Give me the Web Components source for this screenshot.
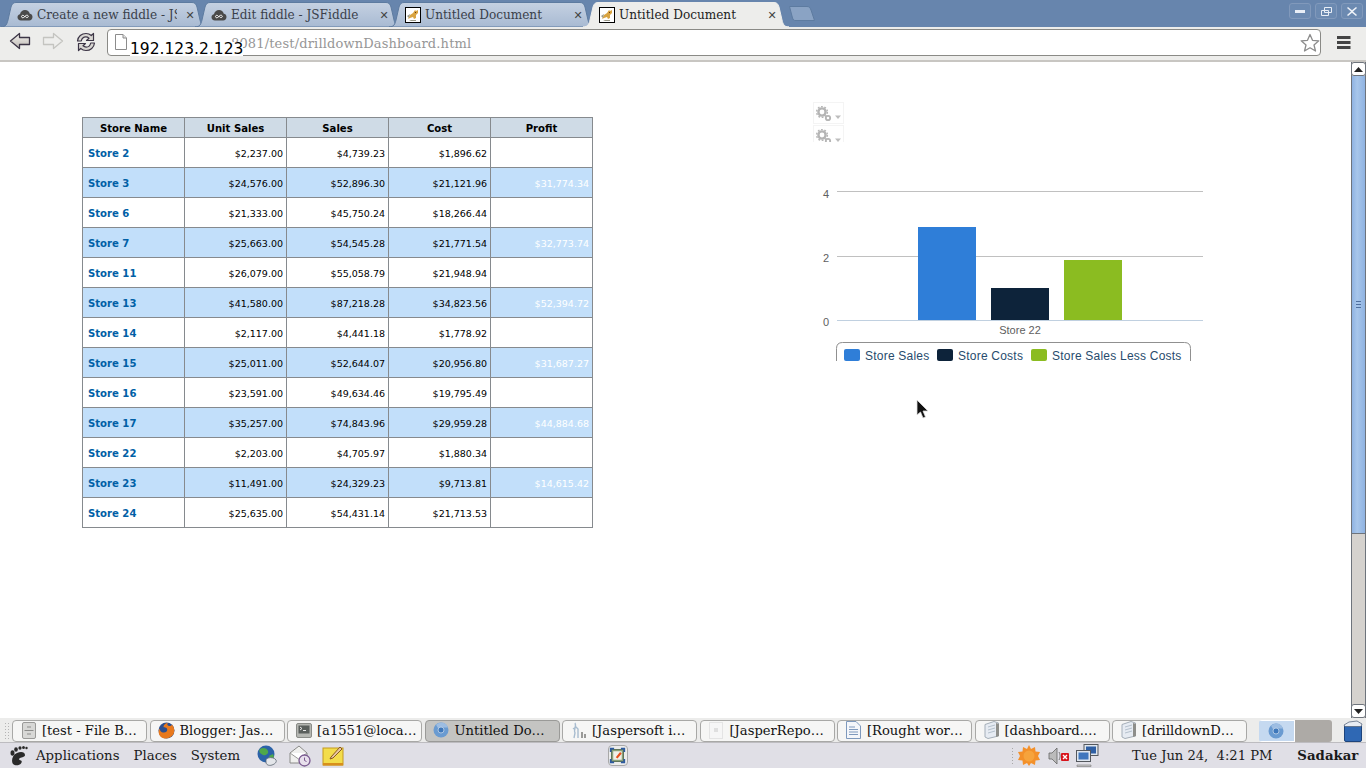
<!DOCTYPE html>
<html><head><meta charset="utf-8"><title>Untitled Document</title>
<style>html,body{margin:0;padding:0;overflow:hidden;background:#fff}</style></head>
<body>
<desktop-screen></desktop-screen>
<script>
const I={
cloud:'<svg width="16" height="12" viewBox="0 0 16 12"><path d="M4 11.5C1.8 11.5.5 10 .5 8.3.5 6.600 1.700 5.500 3 5.300 3.400 2.600 5.500 1 8 1c2.400 0 4.300 1.500 4.800 3.800 1.700.2 2.700 1.600 2.700 3.300 0 1.900-1.400 3.400-3.300 3.400z" fill="#4a4a4a"/><path d="M7.600 7.500c-.7-1-1.500-1.300-2.200-1.100-.8.200-1.100 1-.8 1.700.4.800 1.600.9 2.400.1l1.800-1.500c.8-.7 1.800-.6 2.300.1.400.7.100 1.500-.7 1.700-.8.200-1.500-.1-2.200-1.100" fill="none" stroke="#fff" stroke-width="1"/></svg>',
cat:'<svg width="16" height="16" viewBox="0 0 16 16"><rect x=".5" y=".5" width="15" height="15" fill="#fff" stroke="#000"/><path d="M3 12 5 8l3-2 2-3 1 1 2-1v3l-2 2v3l-2 1-1-2-3 1z" fill="#d9a441"/><path d="M2 9l3-2-1 4zM6 13h5v1H4z" fill="#9a9a8a"/><path d="M10 5h1v1h-1z" fill="#6a3a10"/></svg>',
back:'<svg width="22" height="20" viewBox="0 0 22 20"><path d="M1.500 10 10.500 2.500V6.500H20.500V13.500H10.500V17.500Z" fill="url(#g)" stroke="#3c3546" stroke-width="1.300" stroke-linejoin="round"/><defs><linearGradient id="g" x1="0" x2="0" y1="0" y2="1"><stop offset="0" stop-color="#f4f2ee"/><stop offset="1" stop-color="#bdb9b4"/></linearGradient></defs></svg>',
fwd:'<svg width="22" height="20" viewBox="0 0 22 20"><path d="M20.500 10 11.500 2.500V6.500H1.500V13.500H11.500V17.500Z" fill="#eeeeec" stroke="#c4c4c0" stroke-width="1.300" stroke-linejoin="round"/></svg>',
reload:'<svg width="22" height="22" viewBox="0 0 22 22"><path d="M2.500 10C3 5.500 6.500 2.500 11 2.500c2.500 0 4 .8 5.300 2L18.500 2.500V9.500H11.500L14 7.200C13 6.300 12 5.900 10.800 5.900 8.500 5.900 6.800 7.500 6.300 10Z" fill="#d8d6d2" stroke="#3c3546" stroke-width="1.200" stroke-linejoin="round"/><path d="M19.500 12C19 16.500 15.500 19.500 11 19.500c-2.500 0-4-.8-5.300-2L3.500 19.500V12.500H10.500L8 14.800C9 15.700 10 16.100 11.200 16.100c2.300 0 4-1.600 4.500-4.100Z" fill="#d8d6d2" stroke="#3c3546" stroke-width="1.200" stroke-linejoin="round"/></svg>',
page:'<svg width="12" height="16" viewBox="0 0 12 16"><path d="M.5.500H8L11.500 4V15.500H.5Z" fill="#fff" stroke="#8c8c8c"/><path d="M8 .5V4H11.500" fill="#e4e4e4" stroke="#8c8c8c"/></svg>',
star:'<svg width="20" height="19" viewBox="0 0 20 19"><path d="M10 1.500 12.500 7.300 18.800 7.800 14 12 15.500 18 10 14.800 4.500 18 6 12 1.200 7.800 7.500 7.300Z" fill="#fff" stroke="#8c8c8c" stroke-width="1.300" stroke-linejoin="round"/></svg>',
burger:'<svg width="14" height="13" viewBox="0 0 14 13"><path d="M0 0h13.500v3H0zM0 5h13.500v3H0zM0 10h13.500v3H0z" fill="#444"/></svg>',
gear:'<svg width="29" height="20" viewBox="0 0 29 20"><g fill="none" stroke="#b5b5b5"><circle cx="8" cy="9" r="3.600" stroke-width="2.400"/><circle cx="8" cy="9" r="5.400" stroke-width="1.400" stroke-dasharray="1.800 1.600"/><circle cx="14" cy="15" r="2.200" stroke-width="1.800"/></g><path d="M21 12.500h6l-3 3.500z" fill="#bdbdbd"/></svg>',
cabinet:'<svg width="16" height="17" viewBox="0 0 16 17"><rect x="1.500" y=".5" width="13" height="16" rx="1.500" fill="#d8d8d6" stroke="#9a9a98"/><path d="M3.500 8.500h9M6 5h4M6 12h4" stroke="#8c8c8a" fill="none"/></svg>',
firefox:'<svg width="17" height="17" viewBox="0 0 17 17"><circle cx="8.500" cy="8.500" r="8" fill="#2c4f8f"/><path d="M14 2.500C17 6 17 11 14 14 11 17 5.500 17.500 2.500 14.500 .5 12.500 0 9 1.500 6.500 2 9 3.500 10.500 5 10.500 8 11 10 9 9 6.500 8 5 6 6 5.500 5 5.500 3 7.500 1 10 1c-1 1 -1 2 0 2.500 1.500 1 3.500 .5 4-1z" fill="#e8791d"/></svg>',
term:'<svg width="16" height="16" viewBox="0 0 16 16"><rect x=".5" y="1.500" width="15" height="14" rx="1.500" fill="#b5b7b2" stroke="#8a8c88"/><rect x="2.500" y="3.500" width="11" height="8" fill="#5a5f5c"/><path d="M4 5l2 1.500L4 8M7 8.500h3" stroke="#e8e8e8" fill="none"/></svg>',
chrome:'<svg width="16" height="16" viewBox="0 0 16 16"><circle cx="8" cy="8" r="7.500" fill="#6a9bd1"/><path d="M8 .5A7.500 7.500 0 0 1 15 5.500H8A2.600 2.600 0 0 0 5.500 7L3 2.800A7.500 7.500 0 0 1 8 .5z" fill="#9dbde2"/><circle cx="8" cy="8" r="3" fill="#3f78bb" stroke="#c4d6ea" stroke-width=".8"/></svg>',
jasper:'<svg width="16" height="18" viewBox="0 0 16 18"><path d="M4 2c2 3-2 7 0 10l-1 5M4 5l3 3 0 9M2 8l3-2" stroke="#a8bccf" stroke-width="1.400" fill="none"/><path d="M10 11h2v6h-2zM13 13h2v4h-2z" fill="#9a9a98"/></svg>',
blank:'<svg width="14" height="17" viewBox="0 0 14 17"><rect x=".5" y=".5" width="13" height="16" fill="#f6f6f6" stroke="#e4e4e4"/><path d="M5 7h4M5 9h4" stroke="#c8c8c8"/></svg>',
doc:'<svg width="15" height="18" viewBox="0 0 15 18"><path d="M.5.500H10L14.500 5V17.500H.5Z" fill="#f4f6fa" stroke="#7e99bd"/><path d="M3 6h6M3 8.500h9M3 11h9M3 13.500h9" stroke="#7e99bd"/></svg>',
note:'<svg width="17" height="18" viewBox="0 0 17 18"><path d="M2 3.500 11 .5 15.500 2 15.500 15 5 17.500 2 16Z" fill="#e6ebf2" stroke="#a4aeb8"/><path d="M5 6l7-2M5 9l7-2M5 12l7-2" stroke="#b4c0cc"/><path d="M13 2l3 1v12l-3 1z" fill="#8e8e8a"/></svg>',
foot:'<svg width="20" height="22" viewBox="0 0 20 22"><path d="M8 8c4-2 8-1 8 2 0 2-3 2-5 3-1.500 1-1 2 1 2.500 1 .3 1 1.500 0 3-1.500 2-6 2.500-8 .5-2-2.500-1-9 4-11z" fill="#2a2a2a"/><ellipse cx="3.500" cy="8" rx="2" ry="2.800" fill="#2a2a2a"/><ellipse cx="7" cy="4.500" rx="1.800" ry="2.200" fill="#2a2a2a"/><ellipse cx="11" cy="3" rx="1.600" ry="1.800" fill="#2a2a2a"/><ellipse cx="14.500" cy="2.500" rx="1.400" ry="1.500" fill="#2a2a2a"/><ellipse cx="17.500" cy="3" rx="1.200" ry="1.200" fill="#2a2a2a"/></svg>',
globe:'<svg width="22" height="21" viewBox="0 0 22 21"><circle cx="10" cy="9" r="8.500" fill="#2b62a8"/><path d="M4 4c3-2 7-1 8 2s-3 5-5 4-5-3-3-6zM13 11l4-2 1 3-3 3z" fill="#4fa84a"/><path d="M12 13c3-1 7 0 8 2s-1 4-4 5-6 0-6-3 0-3 2-4z" fill="#e4e6ea" stroke="#5a6470" stroke-width=".8"/></svg>',
mail:'<svg width="22" height="22" viewBox="0 0 22 22"><path d="M1 8 10 1l8 7v10H1z" fill="#f0f0ee" stroke="#8a8a88"/><path d="M1 8l8.500 6L18 8" fill="#fff" stroke="#9a9a98"/><circle cx="15.500" cy="15.500" r="5.500" fill="#e8e0ec" stroke="#7a5a90" stroke-width="1.300"/><path d="M15.500 12.500v3l2 1" stroke="#7a5a90" fill="none"/></svg>',
pad:'<svg width="22" height="22" viewBox="0 0 22 22"><rect x="1" y="3" width="20" height="17" fill="#f3dd4b" stroke="#c49a1e"/><rect x="1" y="18" width="20" height="2.500" fill="#d88f1c"/><path d="M9 12l9-10 2 2-9 9-3 1z" fill="#e8c8a0" stroke="#8a5a20"/></svg>',
edit:'<svg width="20" height="20" viewBox="0 0 20 20"><rect x="3" y="3" width="14" height="14" fill="#8aa078" stroke="#50684a"/><rect x="5" y="5" width="10" height="10" fill="#f0f0e8"/><path d="M8 12l5-6 2 1.500-5 6z" fill="#e8501c"/><path d="M1 1h5v2H3v3H1zM19 1h-5v2h3v3h2zM1 19h5v-2H3v-3H1zM19 19h-5v-2h3v-3h2z" fill="#2c5aa0"/></svg>',
sun:'<svg width="22" height="22" viewBox="0 0 22 22"><path d="M11 0l2 4 4-2 .5 4.500 4.500.5-2 4 2 4-4.500.500-.5 4.500-4-2-2 3-2-3-4 2-.5-4.500L0 15l2-4-2-4 4.500-.5L5 2l4 2z" fill="#f3902a"/><circle cx="11" cy="11" r="5.500" fill="#f6a33c"/></svg>',
speaker:'<svg width="22" height="18" viewBox="0 0 22 18"><path d="M1 6h3l5-5v16l-5-5H1z" fill="#bbb" stroke="#666" stroke-width=".8"/><path d="M11 5c1.500 2 1.500 6 0 8" stroke="#777" fill="none"/><rect x="13" y="6" width="8" height="8" rx="1" fill="#d8141c"/><path d="M15 8l4 4M19 8l-4 4" stroke="#fff" stroke-width="1.400"/></svg>',
net:'<svg width="23" height="23" viewBox="0 0 23 23"><rect x="8" y=".5" width="14" height="11" fill="#dfe6ee" stroke="#54585e"/><rect x="10" y="2.500" width="10" height="7" fill="#2f5fa4"/><rect x=".5" y="6.500" width="14" height="11" fill="#dfe6ee" stroke="#54585e"/><rect x="2.500" y="8.500" width="10" height="7" fill="#3f76bd"/><path d="M1 21h14v1.500H1z" fill="#cfcfcf" stroke="#777" stroke-width=".6"/></svg>',
trash:'<svg width="20" height="22" viewBox="0 0 20 22"><path d="M1.500 6h17v14a1.500 1.500 0 0 1-1.500 1.500H3A1.500 1.500 0 0 1 1.500 20Z" fill="#2f68b4" stroke="#1d447c"/><path d="M1 5l5-3 8-1 5 3-1 2.500H2z" fill="#e8ecf2" stroke="#5a6a80" stroke-width=".8"/></svg>',
cursor:'<svg width="14" height="20" viewBox="0 0 14 20"><path d="M1 1V16L4.500 13 7 19 9.500 18 7 12H12Z" fill="#111" stroke="#ddd" stroke-width=".8"/></svg>'
};
function shadow(el,html){el.attachShadow({mode:'open'}).innerHTML=html;return el.shadowRoot}

class BrowserTab extends HTMLElement{connectedCallback(){
 const a=this.hasAttribute('active');
 shadow(this,`<style>
 :host{display:block;position:relative;width:206px;height:25px;margin-right:-12px;font:13px "DejaVu Serif",serif;color:${a?'#222':'#3a3f4a'};z-index:${a?2:1}}
 svg.bg{position:absolute;inset:0}
 .c{position:absolute;inset:0;display:flex;align-items:center;padding:1px 11px 0 16px;box-sizing:border-box;gap:4px}
 .i{flex:none;width:16px;display:flex;justify-content:center}.i svg{display:block}
 .t{flex:1;min-width:0;white-space:nowrap;overflow:hidden;font-size:12.100px}
 .x{flex:none;width:12px;text-align:center;font:bold 11px "DejaVu Sans",sans-serif;color:#444;margin-left:3px}
 </style>
 <svg class="bg" width="206" height="25"><defs><linearGradient id="t" x1="0" x2="0" y1="0" y2="1"><stop offset="0" stop-color="#c5d1e2"/><stop offset="1" stop-color="#a8bad2"/></linearGradient></defs>
 <path d="M0 25C5 25 6 22 7 18L10 5C11 2 12 .5 15 .5H191C194 .5 195 2 196 5L199 18C200 22 201 25 206 25Z" fill="${a?'#ededeb':'url(#t)'}" stroke="${a?'#ededeb':'#5d7ba0'}"/></svg>
 <div class="c"><span class="i">${I[this.getAttribute('icon')]}</span><span class="t"><slot></slot></span><span class="x">✕</span></div>`);
}}
customElements.define('browser-tab',BrowserTab);

class TabStrip extends HTMLElement{connectedCallback(){
 shadow(this,`<style>
 :host{display:flex;height:27px;box-sizing:border-box;padding:2px 0 0 1px;background:#6785ad;position:relative}
 .new{width:26px;height:15px;margin:4px 0 0 12px;flex:none}
 .sp{flex:1}
 .wb{display:flex;gap:4px;padding:0 3px 0 0;margin-top:1px;height:16px}
 .b{width:22px;height:16px;border:1px solid #8199bb;border-radius:3px;background:#6c8ab1;display:flex;align-items:center;justify-content:center;box-sizing:border-box}
 </style><slot></slot>
 <svg class="new" viewBox="0 0 26 15"><path d="M.5 .5H18C20 .5 21 1.500 22 4L25.500 14.500H6C5 14.500 4 13.500 3.500 12Z" fill="#8aa3c4" stroke="#5d7ba0"/></svg>
 <span class="sp"></span>
 <div class="wb">
  <span class="b"><svg width="10" height="3"><rect width="10" height="3" fill="#e8eef6"/></svg></span>
  <span class="b"><svg width="11" height="9"><path d="M3.500 .5h7v5h-7zM.5 3.500h7v5h-7z" fill="#6c8ab1" stroke="#e8eef6"/></svg></span>
  <span class="b"><svg width="10" height="9"><path d="M1 0l4 3.200L9 0l1 1-4 3.500L10 8l-1 1-4-3.200L1 9 0 8l4-3.500L0 1z" fill="#eef2f8"/></svg></span>
 </div>`);
}}
customElements.define('tab-strip',TabStrip);

class AddressBar extends HTMLElement{connectedCallback(){
 shadow(this,`<style>
 :host{display:flex;align-items:center;height:35px;box-sizing:border-box;background:#ededeb;border-bottom:2px solid #c8c6c2;padding:0 15px 3px 9px;font:13px "DejaVu Serif",serif}
 .n{display:flex;gap:11px;flex:none}.n svg{display:block}
 .box{position:relative;flex:1;height:27px;margin:0 16px 0 10px;box-sizing:border-box;border:1px solid #8a8a86;border-radius:4px;background:#fff;display:flex;align-items:center;padding:0 0 0 7px}
 .u{flex:1;color:#969696;font-size:13px;white-space:nowrap;padding-left:104px;padding-top:2px;letter-spacing:.012em}
 .mask{position:absolute;left:22px;top:12px;background:#fff;font:15.500px/15px "DejaVu Sans",sans-serif;color:#000;height:14px;white-space:nowrap}
 .pg{flex:none;display:flex}
 </style>
 <div class="n"><span>${I.back}</span><span>${I.fwd}</span><span>${I.reload}</span></div>
 <div class="box"><span class="pg">${I.page}</span><span class="u">8081/test/drilldownDashboard.html</span><span class="mask">192.123.2.123</span>${I.star}</div>
 ${I.burger}`);
}}
customElements.define('address-bar',AddressBar);

class StoreTable extends HTMLElement{connectedCallback(){
 const rows=[['Store 2','$2,237.00','$4,739.23','$1,896.62',''],['Store 3','$24,576.00','$52,896.30','$21,121.96','$31,774.34'],['Store 6','$21,333.00','$45,750.24','$18,266.44',''],['Store 7','$25,663.00','$54,545.28','$21,771.54','$32,773.74'],['Store 11','$26,079.00','$55,058.79','$21,948.94',''],['Store 13','$41,580.00','$87,218.28','$34,823.56','$52,394.72'],['Store 14','$2,117.00','$4,441.18','$1,778.92',''],['Store 15','$25,011.00','$52,644.07','$20,956.80','$31,687.27'],['Store 16','$23,591.00','$49,634.46','$19,795.49',''],['Store 17','$35,257.00','$74,843.96','$29,959.28','$44,884.68'],['Store 22','$2,203.00','$4,705.97','$1,880.34',''],['Store 23','$11,491.00','$24,329.23','$9,713.81','$14,615.42'],['Store 24','$25,635.00','$54,431.14','$21,713.53','']];
 shadow(this,`<style>
 :host{display:block;flex:none;width:511px;font:9.500px "DejaVu Sans",Verdana,sans-serif;color:#000}
 table{border-collapse:collapse;table-layout:fixed;width:511px}
 td,th{border:1px solid #868a8e;padding:2px 3px 0 5px;box-sizing:border-box;white-space:nowrap;overflow:hidden}
 th{height:20px;background:#cfdbe6;font:bold 10.100px "DejaVu Sans",sans-serif;text-align:center;padding-left:3px}
 td{height:30px;text-align:right}
 td:first-child{text-align:left;color:#0060a6;font-weight:bold;font-size:10.100px}
 tr.a td{background:#c2dffa}
 td.p{color:#fff}
 col{width:102px}
 </style><table><colgroup><col><col><col><col><col></colgroup>
 <tr><th>Store Name</th><th>Unit Sales</th><th>Sales</th><th>Cost</th><th>Profit</th></tr>
 ${rows.map((r,i)=>`<tr class="${i%2?'a':''}">${r.map((c,j)=>`<td class="${j==4?'p':''}">${c}</td>`).join('')}</tr>`).join('')}
 </table>`);
}}
customElements.define('store-table',StoreTable);

class BarChart extends HTMLElement{connectedCallback(){
 shadow(this,`<style>
 :host{display:block;flex:none;width:400px;position:relative}
 .g{width:31px;height:22px;flex:none;border:1px solid #f4f4f4;box-sizing:border-box;overflow:hidden;display:block}
 .gs{display:flex;flex-direction:column;gap:1px;height:40px;overflow:hidden;margin:-1px 0 0 -2px}
 svg.c{display:block;margin-top:0}
 text{font-family:"Liberation Sans",Arial,sans-serif}
 </style>
 <div class="gs"><span class="g">${I.gear}</span><span class="g">${I.gear}</span></div>
 <svg class="c" width="400" height="219" viewBox="0 0 400 219">
  <g stroke="#c0c0c0"><path d="M22 49.500H388M22 114.500H388"/></g>
  <path d="M22 178.500H388" stroke="#c0d0e0"/>
  <g fill="#606060" font-size="11" text-anchor="end"><text x="14" y="56">4</text><text x="14" y="120">2</text><text x="14" y="184">0</text></g>
  <rect x="103" y="85" width="58" height="93" fill="#2f7ed8"/><rect x="176" y="146" width="58" height="32" fill="#0d233a"/><rect x="249" y="118" width="58" height="60" fill="#8bbc21"/>
  <text x="205" y="192" text-anchor="middle" fill="#606060" font-size="11">Store 22</text>
  <path d="M21.500 219V206.500Q21.500 200.500 27.500 200.500H369.500Q375.500 200.500 375.500 206.500V219" fill="none" stroke="#909090"/>
  <g fill="#274b6d" font-size="12" letter-spacing=".22">
   <rect x="29" y="207" width="16" height="12" rx="2" fill="#2f7ed8"/><text x="50" y="218">Store Sales</text>
   <rect x="122" y="207" width="16" height="12" rx="2" fill="#0d233a"/><text x="143" y="218">Store Costs</text>
   <rect x="216" y="207" width="16" height="12" rx="2" fill="#8bbc21"/><text x="237" y="218">Store Sales Less Costs</text>
  </g>
 </svg>`);
}}
customElements.define('bar-chart',BarChart);

class ScrollBar extends HTMLElement{connectedCallback(){
 shadow(this,`<style>
 :host{display:flex;flex-direction:column;flex:none;width:15px;box-sizing:border-box;background:#d5d2ce;border-left:1px solid #6e747c;border-right:1px solid #6e747c}
 .b{height:14px;flex:none;background:#fff;display:flex;align-items:center;justify-content:center;border-radius:3px;border:1px solid #6e747c;margin:0 -1px;box-sizing:border-box}
 .th{height:457px;flex:none;background:linear-gradient(90deg,#8fb3e2,#a8c6ea 40%,#8fb3e2);border-bottom:1px solid #6e747c;position:relative;display:flex;align-items:center;justify-content:center}
 .gr{width:5px;height:7px;background:repeating-linear-gradient(#4f6f9f 0 1px,transparent 1px 3px)}
 .sp{flex:1}
 </style>
 <span class="b"><svg width="9" height="5"><path d="M4.500 0 9 5H0z" fill="#222"/></svg></span>
 <div class="th"><span class="gr"></span></div><span class="sp"></span>
 <span class="b"><svg width="9" height="5"><path d="M0 0h9L4.500 5z" fill="#222"/></svg></span>`);
}}
customElements.define('scroll-bar',ScrollBar);

class PageArea extends HTMLElement{connectedCallback(){
 shadow(this,`<style>
 :host{display:flex;height:656px;background:#fff;position:relative;flex:none}
 .m{flex:1;display:flex;align-items:flex-start;padding-left:82px}
 store-table{margin-top:55px}
 bar-chart{margin:41px 0 0 222px}
 .cur{position:absolute;left:916px;top:337px}
 </style><div class="m"><store-table></store-table><bar-chart></bar-chart></div><scroll-bar></scroll-bar>
 <span class="cur">${I.cursor}</span>`);
}}
customElements.define('page-area',PageArea);

class TaskButton extends HTMLElement{connectedCallback(){
 const a=this.hasAttribute('active');
 shadow(this,`<style>
 :host{display:flex;align-items:center;flex:none;box-sizing:border-box;width:135px;height:22px;margin-right:2.500px;padding:0 7px 1px 7px;gap:5px;border:1px solid ${a?'#9a9a98':'#a8a8a6'};border-radius:4px;background:${a?'#c4c4c2':'#f6f6f5'};font:13.100px "DejaVu Serif",serif;color:#111;white-space:nowrap;overflow:hidden}
 .i{flex:none;display:flex;width:17px;justify-content:center}
 </style><span class="i">${I[this.getAttribute('icon')]}</span><span><slot></slot></span>`);
}}
customElements.define('task-button',TaskButton);

class TaskBar extends HTMLElement{connectedCallback(){
 shadow(this,`<style>
 :host{display:flex;align-items:center;height:25px;box-sizing:border-box;background:#ececeb;padding:1px 0 0 4px;border-bottom:1px solid #bdbcc0;flex:none}
 .h{width:6px;height:18px;margin-right:2px;background:radial-gradient(circle,#b4b4b4 .7px,transparent 1px) 0 0/3px 3px;flex:none}
 .sw{display:flex;width:73px;height:22px;margin-left:9px;flex:none;border-radius:3px;overflow:hidden}
 .s1{width:36px;background:#c5d9f0;border:1px solid #fff;border-width:1px 1px 1px 0;box-sizing:border-box;display:flex;align-items:center;justify-content:center}
 .s2{flex:1;background:#adaaa6}
 .t{margin-left:auto;padding-right:3px;display:flex}
 </style><span class="h"></span><slot></slot>
 <span class="sw"><span class="s1">${I.chrome}</span><span class="s2"></span></span><span class="t">${I.trash}</span>`);
}}
customElements.define('task-bar',TaskBar);

class GnomePanel extends HTMLElement{connectedCallback(){
 shadow(this,`<style>
 :host{display:flex;align-items:center;height:25px;background:#e0dfe6;font:13.300px "DejaVu Serif",serif;color:#1a1a1a;padding-left:9px;white-space:nowrap;flex:none}
 .f{display:flex;margin-right:7px}.men{margin-right:14px}.men.l{margin-right:16px}
 .q{display:flex;margin-right:11px}
 .ed{width:20px;height:21px;border:1px solid #a8a8a8;border-radius:4px;background:#ececec;display:flex;align-items:center;justify-content:center;margin-left:252.500px;flex:none;box-sizing:border-box}
 .ed svg{width:17px;height:17px}
 .hd{width:3px;height:18px;margin-left:383.500px;background:radial-gradient(circle,#a8a8a8 .6px,transparent 1px) 0 0/3px 3px;flex:none}
 .tr{display:flex;align-items:center;margin-left:4px}
 .tr span{display:flex}.s1{margin:0 6px 0 8px}
 .ck{margin-left:33px;font-size:13.100px;white-space:pre}.us{font-weight:bold;margin-left:25px}
 </style>
 <span class="f">${I.foot}</span><span class="men">Applications</span><span class="men">Places</span><span class="men l">System</span>
 <span class="q">${I.globe}</span><span class="q">${I.mail}</span><span class="q">${I.pad}</span>
 <span class="ed">${I.edit}</span><span class="hd"></span>
 <span class="tr"><span>${I.sun}</span><span class="s1">${I.speaker}</span><span>${I.net}</span></span>
 <span class="ck">Tue Jun 24,  4:21 PM</span><span class="us">Sadakar</span>`);
}}
customElements.define('gnome-panel',GnomePanel);

class DesktopScreen extends HTMLElement{connectedCallback(){
 shadow(this,`<style>:host{display:flex;flex-direction:column;width:1366px;height:768px;overflow:hidden;background:#fff}</style>
 <tab-strip>
  <browser-tab icon="cloud">Create a new fiddle - JS</browser-tab>
  <browser-tab icon="cloud">Edit fiddle - JSFiddle</browser-tab>
  <browser-tab icon="cat">Untitled Document</browser-tab>
  <browser-tab icon="cat" active>Untitled Document</browser-tab>
 </tab-strip>
 <address-bar></address-bar>
 <page-area></page-area>
 <task-bar>
  <task-button icon="cabinet">[test - File B…</task-button>
  <task-button icon="firefox">Blogger: Jas…</task-button>
  <task-button icon="term">[a1551@loca…</task-button>
  <task-button icon="chrome" active>Untitled Do…</task-button>
  <task-button icon="jasper">[Jaspersoft i…</task-button>
  <task-button icon="blank">[JasperRepo…</task-button>
  <task-button icon="doc">[Rought wor…</task-button>
  <task-button icon="note">[dashboard.…</task-button>
  <task-button icon="note">[drilldownD…</task-button>
 </task-bar>
 <gnome-panel></gnome-panel>`);
}}
customElements.define('desktop-screen',DesktopScreen);
</script>
</body></html>
